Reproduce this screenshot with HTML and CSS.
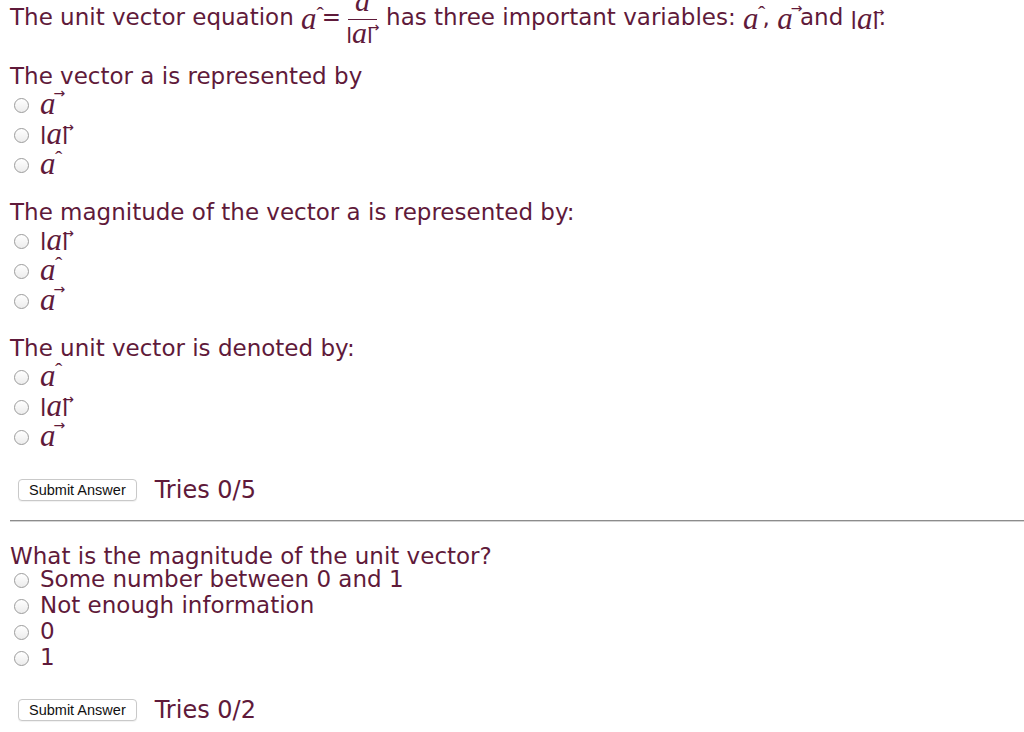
FILE: index.html
```html
<!DOCTYPE html>
<html>
<head>
<meta charset="utf-8">
<link rel="stylesheet" href="styles.css">
</head>
<body>
<div class="page">
  <div class="intro">The unit vector equation <span class="m in"><i class="v">a</i><span class="hat-in">ˆ</span></span><span class="eq">=</span><span class="frac"><span class="num"><i class="v">a</i></span><span class="den"><span class="bar">l</span><i class="v">a</i><span class="bar">l</span><span class="arr">→</span></span></span> has three important variables: <span class="m in"><i class="v">a</i><span class="hat">ˆ</span></span><span class="comma">,</span> <span class="m in"><i class="v">a</i><span class="arr">→</span></span> and <span class="m in abs"><span class="bar">l</span><i class="v">a</i><span class="bar">l</span><span class="arr">→</span></span>.</div>

  <div class="q q1">
    <div class="qtext">The vector a is represented by</div>
    <label class="opt"><span class="radio"></span><span class="m"><i class="v">a</i><span class="arr">→</span></span></label>
    <label class="opt"><span class="radio"></span><span class="m abs"><span class="bar">l</span><i class="v">a</i><span class="bar">l</span><span class="arr">→</span></span></label>
    <label class="opt"><span class="radio"></span><span class="m"><i class="v">a</i><span class="hat">ˆ</span></span></label>
  </div>

  <div class="q">
    <div class="qtext">The magnitude of the vector a is represented by:</div>
    <label class="opt"><span class="radio"></span><span class="m abs"><span class="bar">l</span><i class="v">a</i><span class="bar">l</span><span class="arr">→</span></span></label>
    <label class="opt"><span class="radio"></span><span class="m"><i class="v">a</i><span class="hat">ˆ</span></span></label>
    <label class="opt"><span class="radio"></span><span class="m"><i class="v">a</i><span class="arr">→</span></span></label>
  </div>

  <div class="q">
    <div class="qtext">The unit vector is denoted by:</div>
    <label class="opt"><span class="radio"></span><span class="m"><i class="v">a</i><span class="hat">ˆ</span></span></label>
    <label class="opt"><span class="radio"></span><span class="m abs"><span class="bar">l</span><i class="v">a</i><span class="bar">l</span><span class="arr">→</span></span></label>
    <label class="opt"><span class="radio"></span><span class="m"><i class="v">a</i><span class="arr">→</span></span></label>
  </div>

  <div class="submit-row first">
    <button class="btn">Submit Answer</button>
    <span class="tries">Tries 0/5</span>
  </div>

  <div class="rule"></div>

  <div class="q q2">
    <div class="qtext">What is the magnitude of the unit vector?</div>
    <label class="opt small"><span class="radio"></span><span>Some number between 0 and 1</span></label>
    <label class="opt small"><span class="radio"></span><span>Not enough information</span></label>
    <label class="opt small"><span class="radio"></span><span>0</span></label>
    <label class="opt small"><span class="radio"></span><span>1</span></label>
  </div>

  <div class="submit-row last">
    <button class="btn">Submit Answer</button>
    <span class="tries">Tries 0/2</span>
  </div>
</div>
</body>
</html>
```

FILE: styles.css
```css
html, body {
  margin: 0;
  padding: 0;
  background: #ffffff;
  overflow: hidden;
}

.page {
  padding-left: 10px;
  font-family: "DejaVu Sans", Verdana, sans-serif;
  font-size: 23px;
  color: #5f1a3a;
}

.intro {
  height: 44px;
  line-height: 34px;
  white-space: nowrap;
}

.m {
  position: relative;
  display: inline-block;
  font-family: "Liberation Serif", "Times New Roman", serif;
  font-size: 31px;
  line-height: 30px;
  height: 30px;
}

.m.in {
  vertical-align: -4px;
}

.v {
  font-style: italic;
}

.bar {
  font-family: "DejaVu Sans", sans-serif;
  font-size: 23px;
  font-style: normal;
}

.hat {
  position: absolute;
  left: 15px;
  top: -1px;
  font-size: 22px;
  line-height: 1;
}

.hat-in {
  display: inline-block;
  font-size: 22px;
  line-height: 1;
  vertical-align: top;
  margin-left: 0;
}

.arr {
  position: absolute;
  left: calc(100% - 2px);
  top: -3px;
  font-size: 14px;
  line-height: 1;
  font-style: normal;
  font-family: "DejaVu Sans", sans-serif;
}

.m.abs .arr {
  left: calc(100% - 6px);
  top: 1px;
}

.comma {
  margin-left: 4px;
}

.eq {
  margin-left: -2px;
}

.frac {
  display: inline-flex;
  flex-direction: column;
  align-items: center;
  vertical-align: top;
  margin-top: -12px;
  margin-left: 5px;
  margin-right: 0;
  font-family: "Liberation Serif", serif;
  font-size: 30px;
}

.num {
  display: block;
  height: 31px;
  width: 29px;
  text-align: center;
  border-bottom: 1px solid #5f1a3a;
  line-height: 26px;
  overflow: hidden;
}

.den {
  position: relative;
  display: block;
  height: 24px;
  line-height: 26px;
  padding-right: 6px;
}

.den .bar {
  font-size: 21px;
}

.den .arr {
  left: calc(100% - 11px);
  top: 0;
}

.q {
  margin-top: 20px;
}

.q1 {
  margin-top: 19px;
}

.qtext {
  line-height: 26px;
}

.opt {
  display: flex;
  align-items: center;
  gap: 11px;
  height: 30px;
  padding-left: 4px;
}

.opt.small {
  height: 26px;
}

.radio {
  width: 15px;
  height: 15px;
  border: 1px solid #9c9c9c;
  border-radius: 50%;
  box-sizing: border-box;
  background: linear-gradient(#ffffff, #ececec);
  flex: none;
  margin-top: 2px;
}

.submit-row {
  display: flex;
  align-items: center;
  gap: 18px;
  padding-left: 8px;
  height: 30px;
}

.submit-row.first {
  margin-top: 24px;
}

.submit-row.last {
  margin-top: 25px;
}

.btn {
  font-family: "Liberation Sans", Arial, sans-serif;
  font-size: 14.5px;
  color: #111;
  background: #ffffff;
  border: 1px solid #c9c9c9;
  border-radius: 4px;
  height: 22px;
  padding: 0 10px;
  box-shadow: 0 1px 1px rgba(0,0,0,0.06);
}

.tries {
  font-size: 24px;
  color: #5f1a3a;
}

.rule {
  margin-top: 15px;
  height: 0;
  border-top: 1px solid #8c8c8c;
  border-bottom: 1px solid #d4d4d4;
}

.q2 {
  margin-top: 24px;
}

.q2 .qtext {
  line-height: 20px;
}
```
